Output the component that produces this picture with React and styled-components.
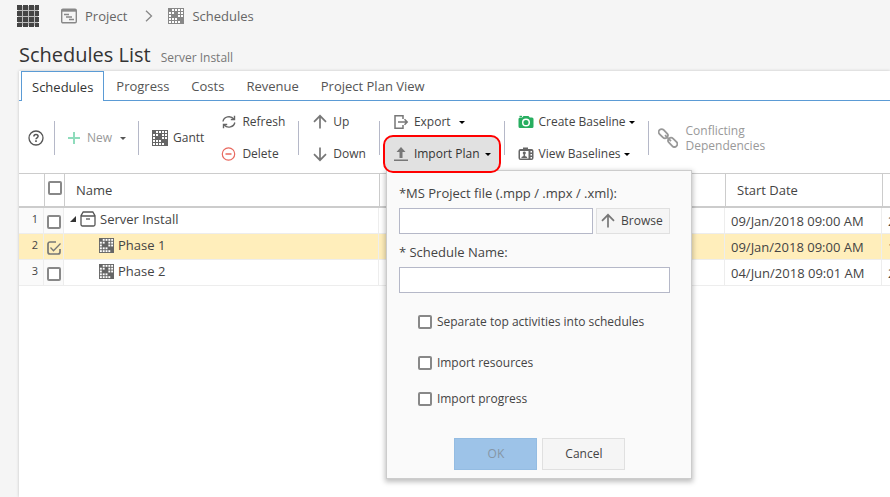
import React from "react";
import styled, { createGlobalStyle, css } from "styled-components";

const GlobalStyle = createGlobalStyle`
  * {
    box-sizing: border-box;
  }
  body {
    margin: 0;
    background: #f5f5f5;
    color: #444;
    font-family: "Open Sans", "Noto Sans", sans-serif;
    font-size: 13px;
    line-height: 18px;
    overflow: hidden;
  }
  button,
  input {
    font: inherit;
    color: inherit;
    margin: 0;
  }
  svg {
    display: block;
    flex: none;
  }
`;

const Page = styled.div`
  min-height: 100vh;
  display: flex;
  flex-direction: column;
  padding-left: 19px;
`;

const Breadcrumb = styled.nav`
  display: flex;
  align-items: center;
  height: 32px;
  margin-left: -2px;
`;

const Crumb = styled.a`
  display: flex;
  align-items: center;
  gap: 8px;
  color: #666;
  text-decoration: none;
`;

const AppsButton = styled.button`
  border: 0;
  padding: 0;
  margin-right: 22px;
  background: none;
`;

const CrumbArrow = styled.span`
  padding: 0 15px 0 18px;
`;

const TitleRow = styled.header`
  display: flex;
  align-items: baseline;
  gap: 10px;
  height: 39px;
  padding-top: 9px;
`;

const Title = styled.h1`
  margin: 0;
  font-size: 20px;
  line-height: 28px;
  font-weight: 400;
  color: #333;
`;

const Subtitle = styled.span`
  font-size: 12px;
  color: #777;
`;

const Panel = styled.main`
  flex: 1;
  display: flex;
  flex-direction: column;
  background: #fff;
  box-shadow: 0 0 3px rgba(0, 0, 0, 0.2);
`;

const Tabs = styled.div`
  display: flex;
  height: 30px;
  padding-left: 2px;
  border-bottom: 1px solid #5b9bd5;
`;

const Tab = styled.button`
  height: 30px;
  padding: 0 10px 2px;
  border: 1px solid transparent;
  border-bottom: 0;
  background: none;
  color: #555;
  ${({ $active }) =>
    $active &&
    css`
      margin-right: 1px;
      padding-bottom: 0;
      border-color: #5b9bd5;
      background: #fff;
      color: #333;
    `}
`;

const Toolbar = styled.div`
  display: flex;
  align-items: center;
  min-height: 72px;
  padding: 5px 0 3px 9px;
  font-size: 12px;
`;

const Separator = styled.span`
  width: 1px;
  height: 34px;
  margin: 0 3px;
  background: #b5b8c8;
`;

const HelpButton = styled.button`
  padding: 0;
  margin-right: 7px;
  border: 0;
  background: none;
`;

const ToolColumn = styled.div`
  display: grid;
  grid-auto-rows: 32px;
  align-items: center;
  justify-items: start;
`;

const ToolButton = styled.button`
  display: flex;
  align-items: center;
  gap: 5px;
  height: 38px;
  padding: 0 8px;
  border: 2px solid transparent;
  border-radius: 10px;
  background: none;
  white-space: nowrap;
  color: ${({ $muted }) => ($muted ? "#999" : "#444")};
`;

const NewButton = styled(ToolButton)`
  padding: 0 7px 0 6px;
`;

const GanttButton = styled(ToolButton)`
  padding-right: 5px;
`;

const ImportButton = styled(ToolButton)`
  position: relative;
  z-index: 3;
  border-color: #f00;
  background: #e1e1e1;
  color: #333;
`;

const ConflictButton = styled(ToolButton)`
  gap: 8px;
  padding: 0 4px;
  line-height: 15px;
  text-align: left;
`;

const Caret = styled.span`
  margin-left: ${({ $gap }) => $gap || 0}px;
  border: 3px solid transparent;
  border-top-color: ${({ $muted }) => ($muted ? "#555" : "#000")};
  border-bottom: 0;
`;

const MenuAnchor = styled.div`
  position: relative;
`;

const ImportMenu = styled.form`
  position: absolute;
  z-index: 2;
  top: 35px;
  left: 3px;
  width: 306px;
  padding: 13px 21px 8px 12px;
  border: 1px solid #ccc;
  background: #fafafa;
  box-shadow: 0 2px 5px 1px rgba(0, 0, 0, 0.25);
  font-size: 13px;
`;

const FieldLabel = styled.label`
  display: block;
  margin-bottom: 6px;
`;

const FieldRow = styled.div`
  display: flex;
  gap: 3px;
  margin-bottom: 9px;
`;

const TextInput = styled.input`
  flex: 1;
  min-width: 0;
  height: 26px;
  padding: 0 4px;
  border: 1px solid #b5b8c8;
  background: #fff;
`;

const MenuButton = styled.button`
  display: flex;
  align-items: center;
  justify-content: center;
  gap: 5px;
  height: ${({ $small }) => ($small ? 26 : 32)}px;
  width: ${({ $small }) => ($small ? 74 : 83)}px;
  padding: 0;
  border: 1px solid #e0e0e0;
  background: #f5f5f5;
  font-size: 12px;
  ${({ $small }) => $small && "padding-right: 3px;"}
  ${({ $primary }) =>
    $primary &&
    css`
      border-color: #94bce2;
      background: #9dc3e8;
      color: #8596a6;
    `}
`;

const CheckList = styled.div`
  display: grid;
  padding: 10px 0 0 19px;
  grid-template-rows: 41px 36px 38px;
`;

const CheckLabel = styled.label`
  display: flex;
  align-items: center;
  gap: 5px;
  height: 20px;
  font-size: 12px;
`;

const MenuActions = styled.div`
  display: flex;
  justify-content: center;
  gap: 5px;
  padding: 11px 0 0 11px;
`;

const CheckWrap = styled.span`
  position: relative;
  display: inline-block;
  width: 14px;
  height: 14px;
  vertical-align: top;
  svg {
    position: absolute;
    top: 0;
    left: 0;
    pointer-events: none;
  }
`;

const CheckInput = styled.input`
  appearance: none;
  display: block;
  width: 14px;
  height: 14px;
  border: 2px solid #888;
  border-radius: 2px;
  background: #fff;
  &:checked {
    border-color: transparent;
    background: none;
  }
`;

const GridScroll = styled.div`
  overflow: hidden;
`;

const Grid = styled.table`
  width: 1100px;
  table-layout: fixed;
  border-collapse: separate;
  border-spacing: 0;
`;

const HeadCell = styled.th`
  height: 35px;
  padding: ${({ $check }) => ($check ? "0 0 0 3px" : "0 11px")};
  border-top: 1px solid #ccc;
  border-bottom: 2px solid #ccc;
  border-left: 1px solid #ccc;
  font-weight: 400;
  text-align: left;
  &:first-child {
    border-left: 0;
  }
`;

const Row = styled.tr`
  background: ${({ $selected }) => ($selected ? "#ffeebb" : "#fff")};
`;

const Cell = styled.td`
  height: 26px;
  padding: 1px 6px 0;
  border-bottom: 1px solid #ededed;
  border-right: 1px solid #ededed;
  white-space: nowrap;
`;

const NumberCell = styled(Cell)`
  padding: 0 5px 4px;
  text-align: right;
  font-size: 11px;
  background: ${({ $selected }) => ($selected ? "transparent" : "#fafafa")};
`;

const CheckCell = styled(Cell)`
  padding: 6px 0 0 3px;
  background: ${({ $selected }) => ($selected ? "transparent" : "#fafafa")};
`;

const NameCell = styled(Cell)`
  padding: 0 5px 3px ${({ $level }) => ($level ? 35 : 6)}px;
`;

const NameContent = styled.span`
  display: flex;
  align-items: center;
  gap: 4px;
`;

const GANTT_CELLS = ["01111", "11011", "10011", "11100", "11110"];

const GanttIcon = ({ color = "#666", size = 15 }) => (
  <svg width={size} height={size} viewBox="0 0 16 16">
    <path fill={color} d="M0 0h16v16H0z" />
    {GANTT_CELLS.map((line, y) =>
      line
        .split("")
        .map((on, x) =>
          on === "1" ? (
            <rect key={`${x}-${y}`} x={1 + x * 3} y={1 + y * 3} width="2" height="2" fill="#fff" />
          ) : null
        )
    )}
  </svg>
);

const AppsIcon = () => (
  <svg width="22" height="22" viewBox="0 0 22 22" fill="#444">
    <path fill="#bbb" d="M1 1h20v20H1z" />
    {[0, 6, 12, 18].map((y) =>
      [0, 6, 12, 18].map((x) => (
        <rect key={`${x}-${y}`} x={x} y={y} width={x === 18 ? 4 : 5} height={y === 18 ? 4 : 5} />
      ))
    )}
  </svg>
);

const ProjectIcon = () => (
  <svg width="16" height="16" viewBox="0 0 16 16" fill="none" stroke="#888">
    <rect x=".7" y="1.2" width="14.6" height="13.6" rx="1.2" strokeWidth="1.4" />
    <path d="M1 2.5h14" strokeWidth="2.4" />
    <path d="M3 6.5h5M5 9h6M8 11.5h5" strokeWidth="1.3" />
  </svg>
);

const ChevronIcon = () => (
  <svg width="8" height="12" viewBox="0 0 8 12" fill="none" stroke="#888" strokeWidth="1.3">
    <path d="M1 .8 6.5 6 1 11.2" />
  </svg>
);

const HelpIcon = () => (
  <svg width="16" height="16" viewBox="0 0 16 16" fill="none" stroke="#555">
    <circle cx="8" cy="8" r="7" strokeWidth="1.3" />
    <path d="M5.9 6.5c0-1.3.9-2.1 2.1-2.1s2.1.8 2.1 1.9c0 1.5-2.1 1.5-2.1 3" strokeWidth="1.5" />
    <path d="M8 10.3v1.6" strokeWidth="1.6" />
  </svg>
);

const PlusIcon = () => (
  <svg width="16" height="16" viewBox="0 0 16 16" stroke="#8fdcbc" strokeWidth="2">
    <path d="M8 2v12M2 8h12" />
  </svg>
);

const RefreshIcon = () => (
  <svg width="16" height="16" viewBox="0 0 16 16" fill="none" stroke="#666" strokeWidth="1.4">
    <path d="M2 7.5A6 5.5 0 0 1 12.8 5M13.800 8.500A6 5.500 0 0 1 3.200 11" />
    <path d="M13.500 1.800v3.700H9.800M2.500 14.200v-3.700H6.200" />
  </svg>
);

const DeleteIcon = () => (
  <svg width="16" height="16" viewBox="0 0 16 16" fill="none" stroke="#e8685e">
    <circle cx="7.500" cy="8" r="6.200" strokeWidth="1.200" />
    <path d="M4.500 8h6" strokeWidth="1.500" />
  </svg>
);

const ArrowIcon = ({ down }) => (
  <svg width="16" height="16" viewBox="0 0 16 16" fill="none" stroke="#777" strokeWidth="1.700">
    <path d={down ? "M8 1.500v12.500M2 8.200l6 6 6-6" : "M8 14.500V2M2 7.800l6-6 6 6"} />
  </svg>
);

const ExportIcon = () => (
  <svg width="16" height="16" viewBox="0 0 16 16" fill="none" stroke="#777" strokeWidth="1.500">
    <path d="M10 5V1.700H2v12.600h8V11" />
    <path d="M5 8h9M11.500 5.300 14.200 8l-2.700 2.700" />
  </svg>
);

const ImportIcon = () => (
  <svg width="16" height="16" viewBox="0 0 16 16" fill="#777">
    <path d="M8 1 3.500 6H6.500v6h3V6h3zM1 13.500h14V15H1z" />
  </svg>
);

const CameraIcon = () => (
  <svg width="16" height="16" viewBox="0 0 16 16" fill="#27ae60">
    <path d="M2 3.500h2.200L5.500 2h5l1.300 1.500H14a1.500 1.500 0 0 1 1.500 1.500v7.500A1.500 1.500 0 0 1 14 14H2A1.500 1.500 0 0 1 .5 12.500V5A1.500 1.500 0 0 1 2 3.500z" />
    <path d="M1.500 1.800h2.500v1.200H1.500z" />
    <circle cx="8" cy="8.500" r="3.300" fill="none" stroke="#fff" strokeWidth="1.500" />
  </svg>
);

const ViewBaselineIcon = () => (
  <svg width="16" height="16" viewBox="0 0 16 16" fill="#666">
    <path d="M5 1.500h5v2H5zM2.500 3h11A2 2 0 0 1 15.500 5v7a2 2 0 0 1-2 2h-11a2 2 0 0 1-2-2V5a2 2 0 0 1 2-2z" />
    <path fill="#fff" d="M2 5h8.500v7.500H2zM12.500 5H14v1.500h-1.500zM12.500 8H14v1.500h-1.500zM12.500 11H14v1.500h-1.500z" />
    <path d="M6.300 5.500a1.500 1.500 0 0 1 .8 2.800V10l2 1v1H3.500v-1l2-1V8.300a1.500 1.500 0 0 1 .8-2.800z" />
  </svg>
);

const LinkIcon = () => (
  <svg width="20" height="20" viewBox="0 0 20 20" fill="none" stroke="#999" strokeWidth="1.800">
    <rect x="0" y="2.800" width="10.500" height="5.800" rx="2.900" transform="rotate(45 5.300 5.700)" />
    <rect x="9.500" y="11.400" width="10.500" height="5.800" rx="2.900" transform="rotate(45 14.700 14.300)" />
    <path d="m7 7.200 6 6" />
  </svg>
);

const ScheduleIcon = () => (
  <svg width="16" height="16" viewBox="0 0 16 16" fill="none" stroke="#555" strokeWidth="1.300">
    <path d="M1 4.700 3.200 1h9.600L15 4.700V13.500a1.500 1.500 0 0 1-1.500 1.500h-11A1.500 1.500 0 0 1 1 13.500zM1 5h14" />
    <path d="M6 8h4" />
  </svg>
);

const ExpandIcon = () => (
  <svg width="6" height="6" viewBox="0 0 6 6" fill="#333">
    <path d="M6 0v6H0z" />
  </svg>
);

const TickIcon = () => (
  <svg width="14" height="14" viewBox="0 0 14 14" fill="none" stroke="#777">
    <path d="M9 1H3a2 2 0 0 0-2 2v8a2 2 0 0 0 2 2h8a2 2 0 0 0 2-2V8" strokeWidth="1.700" />
    <path d="m3.500 6.500 3 3.200L13.500 2.500" strokeWidth="1.300" />
  </svg>
);

const Checkbox = (props) => (
  <CheckWrap>
    <CheckInput type="checkbox" {...props} />
    {props.defaultChecked && <TickIcon />}
  </CheckWrap>
);

const rows = [
  { id: 1, name: "Server Install", start: "09/Jan/2018 09:00 AM", end: "2" },
  { id: 2, name: "Phase 1", start: "09/Jan/2018 09:00 AM", end: "1", level: 1, selected: true },
  { id: 3, name: "Phase 2", start: "04/Jun/2018 09:01 AM", end: "2", level: 1 },
];

const tabs = ["Schedules", "Progress", "Costs", "Revenue", "Project Plan View"];

const ImportPlan = () => (
  <MenuAnchor>
    <ImportButton type="button" aria-expanded="true">
      <ImportIcon />
      Import Plan
      <Caret />
    </ImportButton>
    <ImportMenu onSubmit={(e) => e.preventDefault()}>
      <FieldLabel htmlFor="file">*MS Project file (.mpp / .mpx / .xml):</FieldLabel>
      <FieldRow>
        <TextInput id="file" type="text" />
        <MenuButton type="button" $small>
          <ArrowIcon />
          Browse
        </MenuButton>
      </FieldRow>
      <FieldLabel htmlFor="name">* Schedule Name:</FieldLabel>
      <FieldRow>
        <TextInput id="name" type="text" />
      </FieldRow>
      <CheckList>
        <CheckLabel>
          <Checkbox />
          Separate top activities into schedules
        </CheckLabel>
        <CheckLabel>
          <Checkbox />
          Import resources
        </CheckLabel>
        <CheckLabel>
          <Checkbox />
          Import progress
        </CheckLabel>
      </CheckList>
      <MenuActions>
        <MenuButton type="submit" $primary>
          OK
        </MenuButton>
        <MenuButton type="button">Cancel</MenuButton>
      </MenuActions>
    </ImportMenu>
  </MenuAnchor>
);

const MainToolbar = () => (
  <Toolbar>
    <HelpButton type="button" aria-label="Help">
      <HelpIcon />
    </HelpButton>
    <Separator />
    <NewButton type="button" $muted>
      <PlusIcon />
      New
      <Caret $gap={3} $muted />
    </NewButton>
    <Separator />
    <GanttButton type="button">
      <GanttIcon size={16} />
      Gantt
    </GanttButton>
    <ToolColumn>
      <ToolButton type="button">
        <RefreshIcon />
        Refresh
      </ToolButton>
      <ToolButton type="button">
        <DeleteIcon />
        Delete
      </ToolButton>
    </ToolColumn>
    <Separator />
    <ToolColumn>
      <ToolButton type="button">
        <ArrowIcon />
        Up
      </ToolButton>
      <ToolButton type="button">
        <ArrowIcon down />
        Down
      </ToolButton>
    </ToolColumn>
    <Separator />
    <ToolColumn>
      <ToolButton type="button">
        <ExportIcon />
        Export
        <Caret $gap={3} />
      </ToolButton>
      <ImportPlan />
    </ToolColumn>
    <Separator />
    <ToolColumn>
      <ToolButton type="button">
        <CameraIcon />
        Create Baseline
        <Caret $gap={-2} />
      </ToolButton>
      <ToolButton type="button">
        <ViewBaselineIcon />
        View Baselines
        <Caret $gap={-2} />
      </ToolButton>
    </ToolColumn>
    <Separator />
    <ConflictButton type="button" $muted>
      <LinkIcon />
      <span>
        Conflicting
        <br />
        Dependencies
      </span>
    </ConflictButton>
  </Toolbar>
);

const ScheduleGrid = () => (
  <GridScroll>
    <Grid>
      <colgroup>
        <col width="25" />
        <col width="20" />
        <col width="315" />
        <col width="346" />
        <col width="157" />
        <col />
      </colgroup>
      <thead>
        <tr>
          <HeadCell />
          <HeadCell $check>
            <Checkbox aria-label="Select all" />
          </HeadCell>
          <HeadCell>Name</HeadCell>
          <HeadCell />
          <HeadCell>Start Date</HeadCell>
          <HeadCell />
        </tr>
      </thead>
      <tbody>
        {rows.map((row) => (
          <Row key={row.id} $selected={row.selected}>
            <NumberCell $selected={row.selected}>{row.id}</NumberCell>
            <CheckCell $selected={row.selected}>
              <Checkbox aria-label={row.name} defaultChecked={row.selected} />
            </CheckCell>
            <NameCell $level={row.level}>
              <NameContent>
                {!row.level && <ExpandIcon />}
                {row.level ? <GanttIcon /> : <ScheduleIcon />}
                {row.name}
              </NameContent>
            </NameCell>
            <Cell />
            <Cell>{row.start}</Cell>
            <Cell>{row.end}</Cell>
          </Row>
        ))}
      </tbody>
    </Grid>
  </GridScroll>
);

const App = () => {
  return (
    <>
      <GlobalStyle />
      <Page>
        <Breadcrumb>
          <AppsButton type="button" aria-label="Apps">
            <AppsIcon />
          </AppsButton>
          <Crumb href="#project">
            <ProjectIcon />
            Project
          </Crumb>
          <CrumbArrow>
            <ChevronIcon />
          </CrumbArrow>
          <Crumb href="#schedules">
            <GanttIcon color="#888" size={16} />
            Schedules
          </Crumb>
        </Breadcrumb>
        <TitleRow>
          <Title>Schedules List</Title>
          <Subtitle>Server Install</Subtitle>
        </TitleRow>
        <Panel>
          <Tabs>
            {tabs.map((tab, i) => (
              <Tab key={tab} type="button" $active={i === 0}>
                {tab}
              </Tab>
            ))}
          </Tabs>
          <MainToolbar />
          <ScheduleGrid />
        </Panel>
      </Page>
    </>
  );
};

export default App;
